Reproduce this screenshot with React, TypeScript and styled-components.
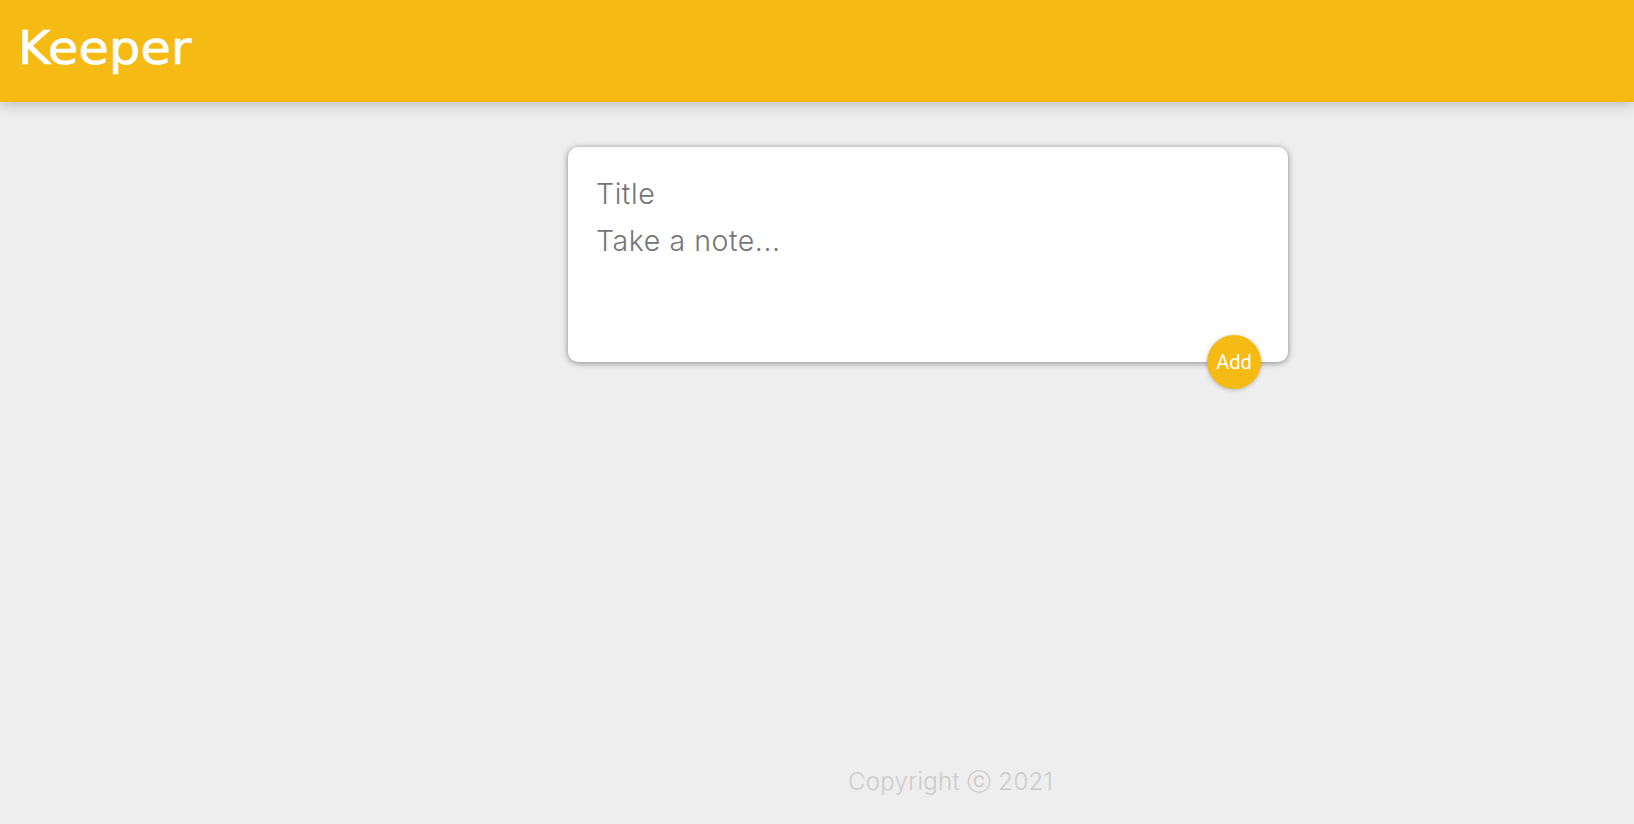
import React from 'react';
import styled, { createGlobalStyle } from 'styled-components';

const GlobalStyle = createGlobalStyle`
  * {
    box-sizing: border-box;
  }
  html, body {
    margin: 0;
    padding: 0;
    background: #eee;
  }
`;

const Page = styled.div`
  display: flex;
  flex-direction: column;
  min-height: 824px;
  overflow: hidden;
  font-family: Inter, "Liberation Sans", sans-serif;
`;

const Header = styled.header`
  display: flex;
  align-items: center;
  height: 102px;
  padding: 0 18px 6px;
  background: #f5ba13;
  box-shadow: 0 0 15px rgba(0, 0, 0, 0.3);
`;

const Logo = styled.h1`
  margin: 0;
  font-family: "DejaVu Sans", sans-serif;
  font-size: 46px;
  font-weight: 400;
  letter-spacing: 0.2px;
  color: #fff;
  -webkit-text-stroke: 0.7px #fff;
  transform: scaleX(1.07);
  transform-origin: left center;
`;

const NoteForm = styled.form`
  position: relative;
  display: flex;
  flex-direction: column;
  width: 720px;
  height: 215px;
  margin: 45px 0 0 568px;
  padding: 23px 28px;
  background: #fff;
  border-radius: 10px;
  box-shadow: 0 1px 6px rgb(0 0 0 / 0.45);
`;

const fieldStyle = `
  width: 100%;
  padding: 0;
  border: none;
  outline: none;
  resize: none;
  background: transparent;
  font-family: Inter, "Liberation Sans", sans-serif;
  font-size: 28.5px;
  font-weight: 300;
  letter-spacing: 0.55px;
  line-height: 47px;
  color: #757575;
  &::placeholder {
    color: #757575;
    opacity: 1;
  }
`;

const TitleInput = styled.input`
  ${fieldStyle}
  height: 47px;
`;

const NoteInput = styled.textarea`
  ${fieldStyle}
  flex: 1;
`;

const AddButton = styled.button`
  position: absolute;
  right: 27px;
  bottom: -27px;
  width: 54px;
  height: 54px;
  padding: 0;
  border: none;
  border-radius: 50%;
  background: #f5ba13;
  box-shadow: 0 1px 4px rgba(0, 0, 0, 0.25);
  font-family: Roboto, sans-serif;
  font-size: 20px;
  color: #fff;
`;

const Footer = styled.footer`
  margin: auto 0 27px 848px;
  font-size: 24px;
  font-weight: 300;
  letter-spacing: 0.3px;
  line-height: 30px;
  color: #ccc;
`;

export default function App() {
  return (
    <Page>
      <GlobalStyle />
      <Header>
        <Logo>Keeper</Logo>
      </Header>
      <NoteForm>
        <TitleInput placeholder="Title" />
        <NoteInput placeholder="Take a note..." rows={3} />
        <AddButton type="button">Add</AddButton>
      </NoteForm>
      <Footer>Copyright ⓒ 2021</Footer>
    </Page>
  );
}
